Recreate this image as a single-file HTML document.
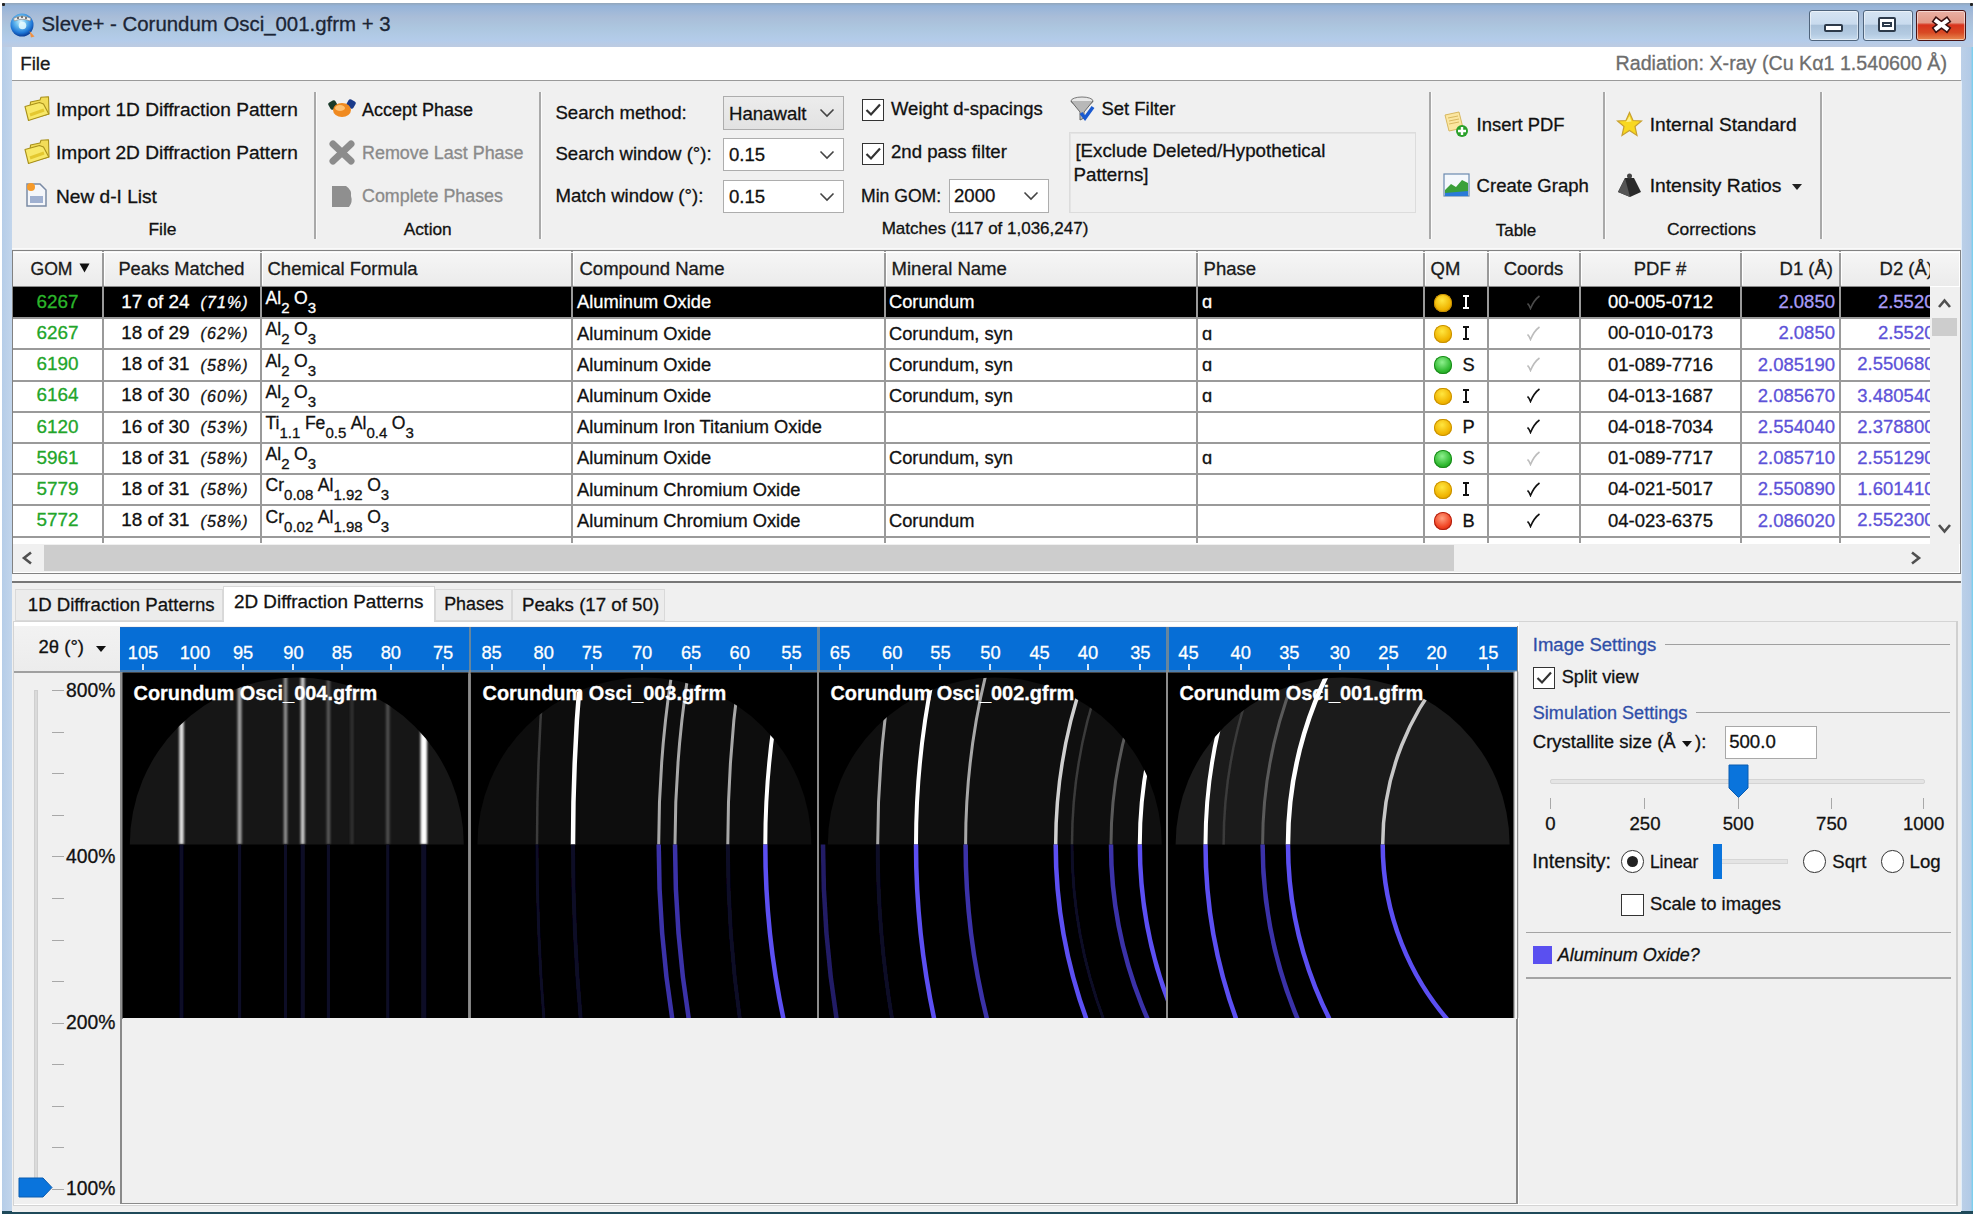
<!DOCTYPE html>
<html><head><meta charset="utf-8"><title>Sleve+</title>
<style>
html,body{margin:0;padding:0;}
body{width:1975px;height:1216px;position:relative;overflow:hidden;background:#fff;font-family:"Liberation Sans",sans-serif;}
.t{position:absolute;white-space:pre;-webkit-text-stroke:0.3px currentColor;}
.r{position:absolute;box-sizing:border-box;}
svg{position:absolute;}
</style></head><body>

<div class="r" style="left:2px;top:3px;width:1971px;height:1210px;background:#bdd2ea;"></div>
<div class="r" style="left:2px;top:3px;width:1971px;height:44px;background:linear-gradient(#92a6ba 0px,#96b4d9 3px,#a9bdd8 14px,#adc7e0 26px,#b4ccea 38px,#bccbe2 43px);"></div>
<div class="r" style="left:2px;top:47px;width:11px;height:1164px;background:linear-gradient(90deg,#b6cde8,#c3d6ec);"></div>
<div class="r" style="left:1961px;top:47px;width:12px;height:1164px;background:linear-gradient(90deg,#bcd0e8,#b2cae6 80%,#6fd0f0);"></div>
<div class="r" style="left:2px;top:1211px;width:1971px;height:3px;background:#1f4a5a;"></div>
<div class="r" style="left:11.5px;top:81px;width:2.5px;height:1130px;background:#e2eef9;"></div>
<div class="r" style="left:1959.5px;top:81px;width:2px;height:1130px;background:#e2eef9;"></div>
<div class="r" style="left:2px;top:3px;width:3px;height:3px;background:#222;border-radius:1px;"></div>
<div class="r" style="left:1970px;top:3px;width:3px;height:3px;background:#222;border-radius:1px;"></div>
<svg style="left:8px;top:10px" width="30" height="30" viewBox="0 0 30 30">
<defs><radialGradient id="gl" cx="45%" cy="35%" r="65%"><stop offset="0" stop-color="#d8f4ff"/><stop offset="0.35" stop-color="#6cc0f0"/><stop offset="0.75" stop-color="#1f78d8"/><stop offset="1" stop-color="#0a3c96"/></radialGradient></defs>
<circle cx="14" cy="15" r="11.5" fill="url(#gl)"/>
<path d="M5.5 8.5 Q14 3.5 23 8.5 L22 11 Q14 7.5 6.5 11 Z" fill="#f0f0f0" stroke="#8c8c8c" stroke-width="0.7"/>
<rect x="9" y="7" width="2" height="2" fill="#777"/><rect x="13" y="6" width="2" height="2" fill="#777"/><rect x="17" y="7" width="2" height="2" fill="#777"/>
<circle cx="14.5" cy="15.5" r="3.8" fill="#e8fbff" opacity="0.85"/>
<path d="M21.5 21 L26.5 26.5 L23 27.5 Z" fill="#f09040"/>
</svg>
<div class="t" style="left:41.5px;top:14.1px;font-size:20.4px;line-height:20.4px;color:#1b2535;font-weight:normal;font-style:normal;">Sleve+ - Corundum Osci_001.gfrm + 3</div>
<div class="r" style="left:1809px;top:10px;width:50px;height:31px;background:linear-gradient(#d6e4f2 0%,#c9dbee 45%,#a9c1d9 50%,#b4cbe2 80%,#c8dcef 100%);border:1.5px solid #4f647c;border-radius:3px;box-shadow:inset 0 0 0 1px rgba(255,255,255,0.5);"></div>
<div class="r" style="left:1863px;top:10px;width:50px;height:31px;background:linear-gradient(#d6e4f2 0%,#c9dbee 45%,#a9c1d9 50%,#b4cbe2 80%,#c8dcef 100%);border:1.5px solid #4f647c;border-radius:3px;box-shadow:inset 0 0 0 1px rgba(255,255,255,0.5);"></div>
<div class="r" style="left:1916px;top:10px;width:50px;height:31px;background:linear-gradient(#eab0a4 0%,#e39a88 40%,#d8321c 48%,#d84a24 75%,#e88a50 100%);border:1.5px solid #4a1212;border-radius:3px;box-shadow:inset 0 0 0 1px rgba(255,255,255,0.5);"></div>
<div class="r" style="left:1824px;top:24px;width:19px;height:8px;background:#fff;border:2px solid #2d3a4a;border-radius:2px;"></div>
<div class="r" style="left:1878px;top:17px;width:18px;height:15px;background:#fff;border:2px solid #2d3a4a;border-radius:2px;"></div>
<div class="r" style="left:1882px;top:22px;width:10px;height:5px;background:#fff;border:2px solid #2d3a4a;"></div>
<svg style="left:1931px;top:16px" width="21" height="18" viewBox="0 0 21 18">
<path d="M5.5 5 L15.5 12.5 M15.5 5 L5.5 12.5" stroke="#3a1010" stroke-width="7" stroke-linecap="square"/>
<path d="M5.5 5 L15.5 12.5 M15.5 5 L5.5 12.5" stroke="#fff" stroke-width="4" stroke-linecap="square"/>
</svg>
<div class="r" style="left:12px;top:47px;width:1949px;height:33px;background:#fff;"></div>
<div class="r" style="left:12px;top:80px;width:1949px;height:1px;background:#9a9a9a;"></div>
<div class="t" style="left:20.2px;top:55.1px;font-size:18.8px;line-height:18.8px;color:#1a1a1a;font-weight:normal;font-style:normal;">File</div>
<div class="t" style="left:1447.0px;width:500px;text-align:right;top:54.3px;font-size:19.66px;line-height:19.66px;color:#6d6d6d;font-weight:normal;font-style:normal;">Radiation: X-ray (Cu Kα1 1.540600 Å)</div>
<div class="r" style="left:12px;top:81px;width:1949px;height:169px;background:#f0f0f0;"></div>
<div class="r" style="left:12px;top:248px;width:1949px;height:1.2px;background:#fafafa;"></div>
<div class="r" style="left:313.5px;top:92px;width:2px;height:147px;background:#a9a9a9;"></div>
<div class="r" style="left:315.5px;top:92px;width:1px;height:147px;background:#fbfbfb;"></div>
<div class="r" style="left:539px;top:92px;width:2px;height:147px;background:#a9a9a9;"></div>
<div class="r" style="left:541px;top:92px;width:1px;height:147px;background:#fbfbfb;"></div>
<div class="r" style="left:1428.5px;top:92px;width:2px;height:147px;background:#a9a9a9;"></div>
<div class="r" style="left:1430.5px;top:92px;width:1px;height:147px;background:#fbfbfb;"></div>
<div class="r" style="left:1602.5px;top:92px;width:2px;height:147px;background:#a9a9a9;"></div>
<div class="r" style="left:1604.5px;top:92px;width:1px;height:147px;background:#fbfbfb;"></div>
<div class="r" style="left:1820px;top:92px;width:2px;height:147px;background:#a9a9a9;"></div>
<div class="r" style="left:1822px;top:92px;width:1px;height:147px;background:#fbfbfb;"></div>
<svg style="left:24px;top:96px" width="27" height="26" viewBox="0 0 27 26">
<path d="M6.5 6 L16 4 L17 1.2 L24.5 0.8 L25 18 L5 23.5 Z" fill="#f2dc58" stroke="#a8901a" stroke-width="1.1" stroke-linejoin="round"/>
<path d="M1 10.5 L15.5 6.5 L19.5 8 L24.8 18 L4.5 24.5 Z" fill="#f8e868" stroke="#a8901a" stroke-width="1.1" stroke-linejoin="round"/>
<path d="M6 19 L20 14" stroke="#e4c830" stroke-width="3"/>
</svg>
<svg style="left:24px;top:139px" width="27" height="26" viewBox="0 0 27 26">
<path d="M6.5 6 L16 4 L17 1.2 L24.5 0.8 L25 18 L5 23.5 Z" fill="#f2dc58" stroke="#a8901a" stroke-width="1.1" stroke-linejoin="round"/>
<path d="M1 10.5 L15.5 6.5 L19.5 8 L24.8 18 L4.5 24.5 Z" fill="#f8e868" stroke="#a8901a" stroke-width="1.1" stroke-linejoin="round"/>
<path d="M6 19 L20 14" stroke="#e4c830" stroke-width="3"/>
</svg>
<svg style="left:25px;top:182px" width="24" height="26" viewBox="0 0 24 26">
<path d="M2 2 L15 2 L21 8 L21 24 L2 24 Z" fill="#f4f6fa" stroke="#7a8aa4" stroke-width="1.5"/>
<rect x="5" y="14" width="13" height="7" fill="#9fb0d0"/>
<circle cx="6" cy="5" r="4" fill="#f59a2a"/>
</svg>
<div class="t" style="left:56.0px;top:99.8px;font-size:19.13px;line-height:19.13px;color:#111;font-weight:normal;font-style:normal;">Import 1D Diffraction Pattern</div>
<div class="t" style="left:56.0px;top:143.0px;font-size:19.13px;line-height:19.13px;color:#111;font-weight:normal;font-style:normal;">Import 2D Diffraction Pattern</div>
<div class="t" style="left:56.0px;top:186.8px;font-size:19.13px;line-height:19.13px;color:#111;font-weight:normal;font-style:normal;">New d-I List</div>
<div class="t" style="left:112.5px;width:100px;text-align:center;top:221.3px;font-size:17.4px;line-height:17.4px;color:#111;font-weight:normal;font-style:normal;">File</div>
<svg style="left:328px;top:98px" width="28" height="22" viewBox="0 0 28 22">
<rect x="1" y="3" width="8" height="8" rx="2" transform="rotate(-30 5 7)" fill="#1a3a2a"/>
<rect x="19" y="2" width="8" height="8" rx="2" transform="rotate(30 23 6)" fill="#1a3a8a"/>
<ellipse cx="14" cy="12" rx="9" ry="7" fill="#f08a20"/>
<ellipse cx="12" cy="10" rx="5" ry="3" fill="#ffc070"/>
</svg>
<svg style="left:329px;top:140px" width="26" height="25" viewBox="0 0 26 25">
<path d="M4 4 L22 21 M22 4 L4 21" stroke="#8c8c8c" stroke-width="7" stroke-linecap="round"/>
</svg>
<svg style="left:330px;top:184px" width="24" height="25" viewBox="0 0 24 25">
<path d="M2 2 L16 2 Q22 6 21 12 Q23 18 19 23 L2 23 Z" fill="#8f8f8f"/>
</svg>
<div class="t" style="left:362.0px;top:100.8px;font-size:18.0px;line-height:18.0px;color:#111;font-weight:normal;font-style:normal;">Accept Phase</div>
<div class="t" style="left:362.0px;top:144.5px;font-size:17.95px;line-height:17.95px;color:#8a8a8a;font-weight:normal;font-style:normal;">Remove Last Phase</div>
<div class="t" style="left:362.0px;top:187.9px;font-size:17.86px;line-height:17.86px;color:#8a8a8a;font-weight:normal;font-style:normal;">Complete Phases</div>
<div class="t" style="left:377.7px;width:100px;text-align:center;top:220.6px;font-size:17.3px;line-height:17.3px;color:#111;font-weight:normal;font-style:normal;">Action</div>
<div class="t" style="left:555.4px;top:104.1px;font-size:18.6px;line-height:18.6px;color:#111;font-weight:normal;font-style:normal;">Search method:</div>
<div class="t" style="left:555.4px;top:145.3px;font-size:18.6px;line-height:18.6px;color:#111;font-weight:normal;font-style:normal;">Search window (°):</div>
<div class="t" style="left:555.4px;top:187.3px;font-size:18.6px;line-height:18.6px;color:#111;font-weight:normal;font-style:normal;">Match window (°):</div>
<div class="r" style="left:723px;top:96px;width:121px;height:34px;background:linear-gradient(#ececec,#e2e2e2);border:1px solid #adadad;"></div>
<div class="t" style="left:729.0px;top:104.5px;font-size:18.6px;line-height:18.6px;color:#111;font-weight:normal;font-style:normal;">Hanawalt</div>
<svg style="left:819px;top:108.0px" width="16" height="10" viewBox="0 0 16 10"><path d="M1.5 1.5 L8 8 L14.5 1.5" fill="none" stroke="#444" stroke-width="1.6"/></svg>
<div class="r" style="left:723px;top:138px;width:121px;height:33px;background:#fff;border:1px solid #adadad;"></div>
<div class="t" style="left:729.0px;top:146.0px;font-size:18.6px;line-height:18.6px;color:#111;font-weight:normal;font-style:normal;">0.15</div>
<svg style="left:819px;top:149.5px" width="16" height="10" viewBox="0 0 16 10"><path d="M1.5 1.5 L8 8 L14.5 1.5" fill="none" stroke="#444" stroke-width="1.6"/></svg>
<div class="r" style="left:723px;top:180px;width:121px;height:33px;background:#fff;border:1px solid #adadad;"></div>
<div class="t" style="left:729.0px;top:188.0px;font-size:18.6px;line-height:18.6px;color:#111;font-weight:normal;font-style:normal;">0.15</div>
<svg style="left:819px;top:191.5px" width="16" height="10" viewBox="0 0 16 10"><path d="M1.5 1.5 L8 8 L14.5 1.5" fill="none" stroke="#444" stroke-width="1.6"/></svg>
<div class="r" style="left:861.5px;top:98.5px;width:22px;height:22px;background:#fff;border:1.6px solid #333;"></div>
<svg style="left:861.5px;top:98.5px" width="22" height="22" viewBox="0 0 22 22"><path d="M4.5 11 L9 15.5 L18 5.5" fill="none" stroke="#333" stroke-width="2.2"/></svg>
<div class="r" style="left:861.5px;top:142.5px;width:22px;height:22px;background:#fff;border:1.6px solid #333;"></div>
<svg style="left:861.5px;top:142.5px" width="22" height="22" viewBox="0 0 22 22"><path d="M4.5 11 L9 15.5 L18 5.5" fill="none" stroke="#333" stroke-width="2.2"/></svg>
<div class="t" style="left:891.0px;top:99.8px;font-size:18.49px;line-height:18.49px;color:#111;font-weight:normal;font-style:normal;">Weight d-spacings</div>
<div class="t" style="left:891.0px;top:143.2px;font-size:18.63px;line-height:18.63px;color:#111;font-weight:normal;font-style:normal;">2nd pass filter</div>
<div class="t" style="left:861.0px;top:187.8px;font-size:17.6px;line-height:17.6px;color:#111;font-weight:normal;font-style:normal;">Min GOM:</div>
<div class="r" style="left:949px;top:179px;width:100px;height:34px;background:#fff;border:1px solid #adadad;"></div>
<div class="t" style="left:954.0px;top:187.3px;font-size:18.6px;line-height:18.6px;color:#111;font-weight:normal;font-style:normal;">2000</div>
<svg style="left:1023px;top:191px" width="16" height="10" viewBox="0 0 16 10"><path d="M1.5 1.5 L8 8 L14.5 1.5" fill="none" stroke="#444" stroke-width="1.6"/></svg>
<div class="t" style="left:835.0px;width:300px;text-align:center;top:220.2px;font-size:17.0px;line-height:17.0px;color:#111;font-weight:normal;font-style:normal;">Matches (117 of 1,036,247)</div>
<svg style="left:1069px;top:96px" width="27" height="27" viewBox="0 0 27 27">
<ellipse cx="13" cy="5" rx="11" ry="4" fill="#e8e8e8" stroke="#777" stroke-width="1"/>
<path d="M2 5 L11 16 L11 24 L15 22 L15 16 L24 5" fill="#b8b8b8" stroke="#666" stroke-width="1"/>
<path d="M12 17 L16 22 L24 11" fill="none" stroke="#1a5ad0" stroke-width="3.5"/>
</svg>
<div class="t" style="left:1101.4px;top:100.1px;font-size:18.49px;line-height:18.49px;color:#111;font-weight:normal;font-style:normal;">Set Filter</div>
<div class="r" style="left:1068.5px;top:132px;width:347px;height:81px;background:#f0f0f0;border:1px solid #dcdcdc;box-shadow:inset 1px 1px 0 #e4e4e4;"></div>
<div class="t" style="left:1075.4px;top:142.1px;font-size:18.74px;line-height:18.74px;color:#111;font-weight:normal;font-style:normal;">[Exclude Deleted/Hypothetical</div>
<div class="t" style="left:1073.5px;top:166.1px;font-size:18.74px;line-height:18.74px;color:#111;font-weight:normal;font-style:normal;">Patterns]</div>
<svg style="left:1442px;top:110px" width="29" height="29" viewBox="0 0 29 29">
<path d="M3 5 L17 2 L21 18 L7 21 Z" fill="#fbe6a0" stroke="#d8b860" stroke-width="1"/>
<path d="M6 8 L16 6 M7 11 L17 9 M7 14 L17 12" stroke="#d8b860" stroke-width="1"/>
<circle cx="20" cy="21" r="6" fill="#2aa02a"/>
<path d="M20 17 L20 25 M16 21 L24 21" stroke="#fff" stroke-width="2.4"/>
</svg>
<svg style="left:1443px;top:172px" width="27" height="27" viewBox="0 0 27 27">
<rect x="1" y="2" width="25" height="22" fill="#f4f8fc" stroke="#6a8ab0" stroke-width="1.2"/>
<path d="M2 18 L8 12 L13 15 L19 8 L25 11 L25 24 L2 24 Z" fill="#3aa03a"/>
<path d="M2 21 L25 19 L25 24 L2 24 Z" fill="#2a7ad8"/>
</svg>
<div class="t" style="left:1476.6px;top:116.0px;font-size:18.41px;line-height:18.41px;color:#111;font-weight:normal;font-style:normal;">Insert PDF</div>
<div class="t" style="left:1476.6px;top:176.6px;font-size:18.55px;line-height:18.55px;color:#111;font-weight:normal;font-style:normal;">Create Graph</div>
<div class="t" style="left:1466.0px;width:100px;text-align:center;top:221.5px;font-size:17.0px;line-height:17.0px;color:#111;font-weight:normal;font-style:normal;">Table</div>
<svg style="left:1616px;top:111px" width="27" height="27" viewBox="0 0 27 27">
<path d="M13.5 1.5 L17 9.5 L25.5 10 L19 15.5 L21 24.5 L13.5 19.5 L6 24.5 L8 15.5 L1.5 10 L10 9.5 Z" fill="#f8d820" stroke="#c8a030" stroke-width="1.2"/>
<path d="M13.5 5 L15.5 10.5 L10 11 Z" fill="#fff6a0" opacity="0.8"/>
</svg>
<svg style="left:1616px;top:172px" width="27" height="27" viewBox="0 0 27 27">
<path d="M9 6 L18 6 L25 20 L14 25 L2 20 Z" fill="#2a2a2a"/>
<path d="M9 6 L14 25 L2 20 Z" fill="#555"/>
<circle cx="13.5" cy="4" r="2.5" fill="#444"/>
</svg>
<div class="t" style="left:1649.7px;top:115.4px;font-size:19.16px;line-height:19.16px;color:#111;font-weight:normal;font-style:normal;">Internal Standard</div>
<div class="t" style="left:1649.7px;top:176.0px;font-size:19.26px;line-height:19.26px;color:#111;font-weight:normal;font-style:normal;">Intensity Ratios</div>
<svg style="left:1791px;top:183px" width="12" height="8" viewBox="0 0 12 8"><path d="M1 1 L11 1 L6 7 Z" fill="#222"/></svg>
<div class="t" style="left:1611.5px;width:200px;text-align:center;top:221.2px;font-size:17.41px;line-height:17.41px;color:#111;font-weight:normal;font-style:normal;">Corrections</div>
<div class="r" style="left:12px;top:249.5px;width:1949px;height:324px;background:#fff;border:1.5px solid #828282;"></div>
<div class="r" style="left:13px;top:251px;width:1946px;height:35px;background:linear-gradient(#f6f6f6,#ebebeb);"></div>
<div class="r" style="left:13px;top:285.5px;width:1917px;height:1.5px;background:#8a8a8a;"></div>
<div class="r" style="left:101.7px;top:251px;width:2px;height:35px;background:#9a9a9a;"></div>
<div class="r" style="left:103.7px;top:252px;width:1px;height:33px;background:#fff;"></div>
<div class="r" style="left:259.8px;top:251px;width:2px;height:35px;background:#9a9a9a;"></div>
<div class="r" style="left:261.8px;top:252px;width:1px;height:33px;background:#fff;"></div>
<div class="r" style="left:571.4px;top:251px;width:2px;height:35px;background:#9a9a9a;"></div>
<div class="r" style="left:573.4px;top:252px;width:1px;height:33px;background:#fff;"></div>
<div class="r" style="left:883.5px;top:251px;width:2px;height:35px;background:#9a9a9a;"></div>
<div class="r" style="left:885.5px;top:252px;width:1px;height:33px;background:#fff;"></div>
<div class="r" style="left:1195.5px;top:251px;width:2px;height:35px;background:#9a9a9a;"></div>
<div class="r" style="left:1197.5px;top:252px;width:1px;height:33px;background:#fff;"></div>
<div class="r" style="left:1423.3px;top:251px;width:2px;height:35px;background:#9a9a9a;"></div>
<div class="r" style="left:1425.3px;top:252px;width:1px;height:33px;background:#fff;"></div>
<div class="r" style="left:1487.4px;top:251px;width:2px;height:35px;background:#9a9a9a;"></div>
<div class="r" style="left:1489.4px;top:252px;width:1px;height:33px;background:#fff;"></div>
<div class="r" style="left:1579.3px;top:251px;width:2px;height:35px;background:#9a9a9a;"></div>
<div class="r" style="left:1581.3px;top:252px;width:1px;height:33px;background:#fff;"></div>
<div class="r" style="left:1740.2px;top:251px;width:2px;height:35px;background:#9a9a9a;"></div>
<div class="r" style="left:1742.2px;top:252px;width:1px;height:33px;background:#fff;"></div>
<div class="r" style="left:1839.4px;top:251px;width:2px;height:35px;background:#9a9a9a;"></div>
<div class="r" style="left:1841.4px;top:252px;width:1px;height:33px;background:#fff;"></div>
<div class="r" style="left:13px;top:252px;width:1946px;height:1px;background:#fff;"></div>
<div class="t" style="left:30.5px;top:260.6px;font-size:17.6px;line-height:17.6px;color:#1a1a1a;font-weight:normal;font-style:normal;">GOM</div>
<svg style="left:79px;top:263px" width="11" height="10" viewBox="0 0 11 10"><path d="M0.5 0.5 L10.5 0.5 L5.5 9.5 Z" fill="#111"/></svg>
<div class="t" style="left:118.4px;top:260.0px;font-size:18.3px;line-height:18.3px;color:#1a1a1a;font-weight:normal;font-style:normal;">Peaks Matched</div>
<div class="t" style="left:267.5px;top:259.8px;font-size:18.5px;line-height:18.5px;color:#1a1a1a;font-weight:normal;font-style:normal;">Chemical Formula</div>
<div class="t" style="left:579.5px;top:259.8px;font-size:18.5px;line-height:18.5px;color:#1a1a1a;font-weight:normal;font-style:normal;">Compound Name</div>
<div class="t" style="left:891.6px;top:259.8px;font-size:18.5px;line-height:18.5px;color:#1a1a1a;font-weight:normal;font-style:normal;">Mineral Name</div>
<div class="t" style="left:1203.6px;top:259.8px;font-size:18.5px;line-height:18.5px;color:#1a1a1a;font-weight:normal;font-style:normal;">Phase</div>
<div class="t" style="left:1430.5px;top:259.8px;font-size:18.5px;line-height:18.5px;color:#1a1a1a;font-weight:normal;font-style:normal;">QM</div>
<div class="t" style="left:1488.5px;width:90px;text-align:center;top:259.8px;font-size:18.5px;line-height:18.5px;color:#1a1a1a;font-weight:normal;font-style:normal;">Coords</div>
<div class="t" style="left:1585.0px;width:150px;text-align:center;top:259.8px;font-size:18.5px;line-height:18.5px;color:#1a1a1a;font-weight:normal;font-style:normal;">PDF #</div>
<div class="t" style="left:1743.0px;width:90px;text-align:right;top:259.8px;font-size:18.5px;line-height:18.5px;color:#1a1a1a;font-weight:normal;font-style:normal;">D1 (Å)</div>
<div style="position:absolute;left:1841px;top:251px;width:89px;height:35px;overflow:hidden">
<div class="t" style="left:2.0px;width:90px;text-align:right;top:8.8px;font-size:18.5px;line-height:18.5px;color:#1a1a1a;font-weight:normal;font-style:normal;">D2 (Å)</div>
</div>
<div class="r" style="left:13px;top:287px;width:1917px;height:30.5px;background:#000;"></div>
<div class="r" style="left:13px;top:317px;width:1917px;height:1.5px;background:#9a9a9a;"></div>
<div class="r" style="left:13px;top:348px;width:1917px;height:1.5px;background:#9a9a9a;"></div>
<div class="r" style="left:13px;top:380px;width:1917px;height:1.5px;background:#9a9a9a;"></div>
<div class="r" style="left:13px;top:411px;width:1917px;height:1.5px;background:#9a9a9a;"></div>
<div class="r" style="left:13px;top:442px;width:1917px;height:1.5px;background:#9a9a9a;"></div>
<div class="r" style="left:13px;top:473px;width:1917px;height:1.5px;background:#9a9a9a;"></div>
<div class="r" style="left:13px;top:504px;width:1917px;height:1.5px;background:#9a9a9a;"></div>
<div class="r" style="left:13px;top:536px;width:1917px;height:1.5px;background:#9a9a9a;"></div>
<div class="r" style="left:101.7px;top:287px;width:2px;height:256px;background:#9a9a9a;"></div>
<div class="r" style="left:259.8px;top:287px;width:2px;height:256px;background:#9a9a9a;"></div>
<div class="r" style="left:571.4px;top:287px;width:2px;height:256px;background:#9a9a9a;"></div>
<div class="r" style="left:883.5px;top:287px;width:2px;height:256px;background:#9a9a9a;"></div>
<div class="r" style="left:1195.5px;top:287px;width:2px;height:256px;background:#9a9a9a;"></div>
<div class="r" style="left:1423.3px;top:287px;width:2px;height:256px;background:#9a9a9a;"></div>
<div class="r" style="left:1487.4px;top:287px;width:2px;height:256px;background:#9a9a9a;"></div>
<div class="r" style="left:1579.3px;top:287px;width:2px;height:256px;background:#9a9a9a;"></div>
<div class="r" style="left:1740.2px;top:287px;width:2px;height:256px;background:#9a9a9a;"></div>
<div class="r" style="left:1839.4px;top:287px;width:2px;height:256px;background:#9a9a9a;"></div>
<div class="t" style="left:17.5px;width:80px;text-align:center;top:292.8px;font-size:18.9px;line-height:18.9px;color:#2bb52b;font-weight:normal;font-style:normal;">6267</div>
<div class="t" style="left:121.2px;top:292.8px;font-size:18.9px;line-height:18.9px;color:#fff;font-weight:normal;font-style:normal;">17 of 24</div>
<div class="t" style="left:200.6px;top:295.1px;font-size:16px;line-height:16px;color:#fff;font-weight:normal;font-style:italic;letter-spacing:1.1px;">(71%)</div>
<div class="t" style="left:265.5px;top:290.1px;font-size:17.6px;line-height:17.6px;color:#fff;font-weight:normal;font-style:normal;"><span>Al</span><span style="font-size:15px;position:relative;top:9px;margin-left:0px;margin-right:4.5px">2</span><span>O</span><span style="font-size:15px;position:relative;top:9px;margin-left:0px;margin-right:4.5px">3</span></div>
<div class="t" style="left:577.0px;top:293.3px;font-size:18.3px;line-height:18.3px;color:#fff;font-weight:normal;font-style:normal;">Aluminum Oxide</div>
<div class="t" style="left:889.0px;top:293.3px;font-size:18.3px;line-height:18.3px;color:#fff;font-weight:normal;font-style:normal;">Corundum</div>
<div class="t" style="left:1202.0px;top:293.3px;font-size:18.3px;line-height:18.3px;color:#fff;font-weight:normal;font-style:normal;">ɑ</div>
<div class="r" style="left:1434px;top:294.0px;width:17.5px;height:17.5px;border-radius:50%;background:radial-gradient(circle at 45% 35%,#ffe640,#f0b400 60%,#c89000);box-shadow:inset 0 0 0 1px #c89000;"></div>
<svg style="left:1462px;top:295.0px" width="8" height="14" viewBox="0 0 8 14"><path d="M1 1 L7 1 M4 1 L4 13 M1 13 L7 13" fill="none" stroke="#fff" stroke-width="2"/></svg>
<svg style="left:1526px;top:294.5px" width="15" height="15" viewBox="0 0 15 15"><path d="M1.5 8.5 Q3 9.5 4.5 13.5 Q8 5 13.5 1" fill="none" stroke="#4a4a4a" stroke-width="1.6"/></svg>
<div class="t" style="left:1580.5px;width:160px;text-align:center;top:293.1px;font-size:18.5px;line-height:18.5px;color:#fff;font-weight:normal;font-style:normal;">00-005-0712</div>
<div class="t" style="left:1737.0px;width:98px;text-align:right;top:293.1px;font-size:18.5px;line-height:18.5px;color:#a89cf8;font-weight:normal;font-style:normal;">2.0850</div>
<div style="position:absolute;left:1841px;top:286.5px;width:89px;height:31px;overflow:hidden">
<div class="t" style="left:-4.5px;width:98px;text-align:right;top:6.6px;font-size:18.5px;line-height:18.5px;color:#a89cf8;font-weight:normal;font-style:normal;">2.5520</div>
</div>
<div class="t" style="left:17.5px;width:80px;text-align:center;top:324.0px;font-size:18.9px;line-height:18.9px;color:#22a52a;font-weight:normal;font-style:normal;">6267</div>
<div class="t" style="left:121.2px;top:324.0px;font-size:18.9px;line-height:18.9px;color:#111;font-weight:normal;font-style:normal;">18 of 29</div>
<div class="t" style="left:200.6px;top:326.3px;font-size:16px;line-height:16px;color:#111;font-weight:normal;font-style:italic;letter-spacing:1.1px;">(62%)</div>
<div class="t" style="left:265.5px;top:321.3px;font-size:17.6px;line-height:17.6px;color:#111;font-weight:normal;font-style:normal;"><span>Al</span><span style="font-size:15px;position:relative;top:9px;margin-left:0px;margin-right:4.5px">2</span><span>O</span><span style="font-size:15px;position:relative;top:9px;margin-left:0px;margin-right:4.5px">3</span></div>
<div class="t" style="left:577.0px;top:324.5px;font-size:18.3px;line-height:18.3px;color:#111;font-weight:normal;font-style:normal;">Aluminum Oxide</div>
<div class="t" style="left:889.0px;top:324.5px;font-size:18.3px;line-height:18.3px;color:#111;font-weight:normal;font-style:normal;">Corundum, syn</div>
<div class="t" style="left:1202.0px;top:324.5px;font-size:18.3px;line-height:18.3px;color:#111;font-weight:normal;font-style:normal;">ɑ</div>
<div class="r" style="left:1434px;top:325.2px;width:17.5px;height:17.5px;border-radius:50%;background:radial-gradient(circle at 45% 35%,#ffe640,#f0b400 60%,#c89000);box-shadow:inset 0 0 0 1px #c89000;"></div>
<svg style="left:1462px;top:326.2px" width="8" height="14" viewBox="0 0 8 14"><path d="M1 1 L7 1 M4 1 L4 13 M1 13 L7 13" fill="none" stroke="#111" stroke-width="2"/></svg>
<svg style="left:1526px;top:325.7px" width="15" height="15" viewBox="0 0 15 15"><path d="M1.5 8.5 Q3 9.5 4.5 13.5 Q8 5 13.5 1" fill="none" stroke="#bdbdbd" stroke-width="1.6"/></svg>
<div class="t" style="left:1580.5px;width:160px;text-align:center;top:324.3px;font-size:18.5px;line-height:18.5px;color:#111;font-weight:normal;font-style:normal;">00-010-0173</div>
<div class="t" style="left:1737.0px;width:98px;text-align:right;top:324.3px;font-size:18.5px;line-height:18.5px;color:#5d52d8;font-weight:normal;font-style:normal;">2.0850</div>
<div style="position:absolute;left:1841px;top:317.7px;width:89px;height:31px;overflow:hidden">
<div class="t" style="left:-4.5px;width:98px;text-align:right;top:6.6px;font-size:18.5px;line-height:18.5px;color:#5d52d8;font-weight:normal;font-style:normal;">2.5520</div>
</div>
<div class="t" style="left:17.5px;width:80px;text-align:center;top:355.2px;font-size:18.9px;line-height:18.9px;color:#22a52a;font-weight:normal;font-style:normal;">6190</div>
<div class="t" style="left:121.2px;top:355.2px;font-size:18.9px;line-height:18.9px;color:#111;font-weight:normal;font-style:normal;">18 of 31</div>
<div class="t" style="left:200.6px;top:357.5px;font-size:16px;line-height:16px;color:#111;font-weight:normal;font-style:italic;letter-spacing:1.1px;">(58%)</div>
<div class="t" style="left:265.5px;top:352.5px;font-size:17.6px;line-height:17.6px;color:#111;font-weight:normal;font-style:normal;"><span>Al</span><span style="font-size:15px;position:relative;top:9px;margin-left:0px;margin-right:4.5px">2</span><span>O</span><span style="font-size:15px;position:relative;top:9px;margin-left:0px;margin-right:4.5px">3</span></div>
<div class="t" style="left:577.0px;top:355.7px;font-size:18.3px;line-height:18.3px;color:#111;font-weight:normal;font-style:normal;">Aluminum Oxide</div>
<div class="t" style="left:889.0px;top:355.7px;font-size:18.3px;line-height:18.3px;color:#111;font-weight:normal;font-style:normal;">Corundum, syn</div>
<div class="t" style="left:1202.0px;top:355.7px;font-size:18.3px;line-height:18.3px;color:#111;font-weight:normal;font-style:normal;">ɑ</div>
<div class="r" style="left:1434px;top:356.4px;width:17.5px;height:17.5px;border-radius:50%;background:radial-gradient(circle at 45% 35%,#8ef08e,#2eb82e 60%,#1a8a1a);box-shadow:inset 0 0 0 1px #1a8a1a;"></div>
<div class="t" style="left:1462.5px;top:355.7px;font-size:18.3px;line-height:18.3px;color:#111;font-weight:normal;font-style:normal;">S</div>
<svg style="left:1526px;top:356.9px" width="15" height="15" viewBox="0 0 15 15"><path d="M1.5 8.5 Q3 9.5 4.5 13.5 Q8 5 13.5 1" fill="none" stroke="#bdbdbd" stroke-width="1.6"/></svg>
<div class="t" style="left:1580.5px;width:160px;text-align:center;top:355.5px;font-size:18.5px;line-height:18.5px;color:#111;font-weight:normal;font-style:normal;">01-089-7716</div>
<div class="t" style="left:1737.0px;width:98px;text-align:right;top:355.5px;font-size:18.5px;line-height:18.5px;color:#5d52d8;font-weight:normal;font-style:normal;">2.085190</div>
<div style="position:absolute;left:1841px;top:348.9px;width:89px;height:31px;overflow:hidden">
<div class="t" style="left:-4.5px;width:98px;text-align:right;top:6.6px;font-size:18.5px;line-height:18.5px;color:#5d52d8;font-weight:normal;font-style:normal;">2.550680</div>
</div>
<div class="t" style="left:17.5px;width:80px;text-align:center;top:386.4px;font-size:18.9px;line-height:18.9px;color:#22a52a;font-weight:normal;font-style:normal;">6164</div>
<div class="t" style="left:121.2px;top:386.4px;font-size:18.9px;line-height:18.9px;color:#111;font-weight:normal;font-style:normal;">18 of 30</div>
<div class="t" style="left:200.6px;top:388.7px;font-size:16px;line-height:16px;color:#111;font-weight:normal;font-style:italic;letter-spacing:1.1px;">(60%)</div>
<div class="t" style="left:265.5px;top:383.7px;font-size:17.6px;line-height:17.6px;color:#111;font-weight:normal;font-style:normal;"><span>Al</span><span style="font-size:15px;position:relative;top:9px;margin-left:0px;margin-right:4.5px">2</span><span>O</span><span style="font-size:15px;position:relative;top:9px;margin-left:0px;margin-right:4.5px">3</span></div>
<div class="t" style="left:577.0px;top:386.9px;font-size:18.3px;line-height:18.3px;color:#111;font-weight:normal;font-style:normal;">Aluminum Oxide</div>
<div class="t" style="left:889.0px;top:386.9px;font-size:18.3px;line-height:18.3px;color:#111;font-weight:normal;font-style:normal;">Corundum, syn</div>
<div class="t" style="left:1202.0px;top:386.9px;font-size:18.3px;line-height:18.3px;color:#111;font-weight:normal;font-style:normal;">ɑ</div>
<div class="r" style="left:1434px;top:387.6px;width:17.5px;height:17.5px;border-radius:50%;background:radial-gradient(circle at 45% 35%,#ffe640,#f0b400 60%,#c89000);box-shadow:inset 0 0 0 1px #c89000;"></div>
<svg style="left:1462px;top:388.6px" width="8" height="14" viewBox="0 0 8 14"><path d="M1 1 L7 1 M4 1 L4 13 M1 13 L7 13" fill="none" stroke="#111" stroke-width="2"/></svg>
<svg style="left:1526px;top:388.1px" width="15" height="15" viewBox="0 0 15 15"><path d="M1.5 8.5 Q3 9.5 4.5 13.5 Q8 5 13.5 1" fill="none" stroke="#111" stroke-width="1.6"/></svg>
<div class="t" style="left:1580.5px;width:160px;text-align:center;top:386.7px;font-size:18.5px;line-height:18.5px;color:#111;font-weight:normal;font-style:normal;">04-013-1687</div>
<div class="t" style="left:1737.0px;width:98px;text-align:right;top:386.7px;font-size:18.5px;line-height:18.5px;color:#5d52d8;font-weight:normal;font-style:normal;">2.085670</div>
<div style="position:absolute;left:1841px;top:380.1px;width:89px;height:31px;overflow:hidden">
<div class="t" style="left:-4.5px;width:98px;text-align:right;top:6.6px;font-size:18.5px;line-height:18.5px;color:#5d52d8;font-weight:normal;font-style:normal;">3.480540</div>
</div>
<div class="t" style="left:17.5px;width:80px;text-align:center;top:417.6px;font-size:18.9px;line-height:18.9px;color:#22a52a;font-weight:normal;font-style:normal;">6120</div>
<div class="t" style="left:121.2px;top:417.6px;font-size:18.9px;line-height:18.9px;color:#111;font-weight:normal;font-style:normal;">16 of 30</div>
<div class="t" style="left:200.6px;top:419.9px;font-size:16px;line-height:16px;color:#111;font-weight:normal;font-style:italic;letter-spacing:1.1px;">(53%)</div>
<div class="t" style="left:265.5px;top:414.9px;font-size:17.6px;line-height:17.6px;color:#111;font-weight:normal;font-style:normal;"><span>Ti</span><span style="font-size:15px;position:relative;top:9px;margin-left:0px;margin-right:4.5px">1.1</span><span>Fe</span><span style="font-size:15px;position:relative;top:9px;margin-left:0px;margin-right:4.5px">0.5</span><span>Al</span><span style="font-size:15px;position:relative;top:9px;margin-left:0px;margin-right:4.5px">0.4</span><span>O</span><span style="font-size:15px;position:relative;top:9px;margin-left:0px;margin-right:4.5px">3</span></div>
<div class="t" style="left:577.0px;top:418.1px;font-size:18.3px;line-height:18.3px;color:#111;font-weight:normal;font-style:normal;">Aluminum Iron Titanium Oxide</div>
<div class="t" style="left:889.0px;top:418.1px;font-size:18.3px;line-height:18.3px;color:#111;font-weight:normal;font-style:normal;"></div>
<div class="t" style="left:1202.0px;top:418.1px;font-size:18.3px;line-height:18.3px;color:#111;font-weight:normal;font-style:normal;"></div>
<div class="r" style="left:1434px;top:418.8px;width:17.5px;height:17.5px;border-radius:50%;background:radial-gradient(circle at 45% 35%,#ffe640,#f0b400 60%,#c89000);box-shadow:inset 0 0 0 1px #c89000;"></div>
<div class="t" style="left:1462.5px;top:418.1px;font-size:18.3px;line-height:18.3px;color:#111;font-weight:normal;font-style:normal;">P</div>
<svg style="left:1526px;top:419.3px" width="15" height="15" viewBox="0 0 15 15"><path d="M1.5 8.5 Q3 9.5 4.5 13.5 Q8 5 13.5 1" fill="none" stroke="#111" stroke-width="1.6"/></svg>
<div class="t" style="left:1580.5px;width:160px;text-align:center;top:417.9px;font-size:18.5px;line-height:18.5px;color:#111;font-weight:normal;font-style:normal;">04-018-7034</div>
<div class="t" style="left:1737.0px;width:98px;text-align:right;top:417.9px;font-size:18.5px;line-height:18.5px;color:#5d52d8;font-weight:normal;font-style:normal;">2.554040</div>
<div style="position:absolute;left:1841px;top:411.3px;width:89px;height:31px;overflow:hidden">
<div class="t" style="left:-4.5px;width:98px;text-align:right;top:6.6px;font-size:18.5px;line-height:18.5px;color:#5d52d8;font-weight:normal;font-style:normal;">2.378800</div>
</div>
<div class="t" style="left:17.5px;width:80px;text-align:center;top:448.8px;font-size:18.9px;line-height:18.9px;color:#22a52a;font-weight:normal;font-style:normal;">5961</div>
<div class="t" style="left:121.2px;top:448.8px;font-size:18.9px;line-height:18.9px;color:#111;font-weight:normal;font-style:normal;">18 of 31</div>
<div class="t" style="left:200.6px;top:451.1px;font-size:16px;line-height:16px;color:#111;font-weight:normal;font-style:italic;letter-spacing:1.1px;">(58%)</div>
<div class="t" style="left:265.5px;top:446.1px;font-size:17.6px;line-height:17.6px;color:#111;font-weight:normal;font-style:normal;"><span>Al</span><span style="font-size:15px;position:relative;top:9px;margin-left:0px;margin-right:4.5px">2</span><span>O</span><span style="font-size:15px;position:relative;top:9px;margin-left:0px;margin-right:4.5px">3</span></div>
<div class="t" style="left:577.0px;top:449.3px;font-size:18.3px;line-height:18.3px;color:#111;font-weight:normal;font-style:normal;">Aluminum Oxide</div>
<div class="t" style="left:889.0px;top:449.3px;font-size:18.3px;line-height:18.3px;color:#111;font-weight:normal;font-style:normal;">Corundum, syn</div>
<div class="t" style="left:1202.0px;top:449.3px;font-size:18.3px;line-height:18.3px;color:#111;font-weight:normal;font-style:normal;">ɑ</div>
<div class="r" style="left:1434px;top:450.0px;width:17.5px;height:17.5px;border-radius:50%;background:radial-gradient(circle at 45% 35%,#8ef08e,#2eb82e 60%,#1a8a1a);box-shadow:inset 0 0 0 1px #1a8a1a;"></div>
<div class="t" style="left:1462.5px;top:449.3px;font-size:18.3px;line-height:18.3px;color:#111;font-weight:normal;font-style:normal;">S</div>
<svg style="left:1526px;top:450.5px" width="15" height="15" viewBox="0 0 15 15"><path d="M1.5 8.5 Q3 9.5 4.5 13.5 Q8 5 13.5 1" fill="none" stroke="#bdbdbd" stroke-width="1.6"/></svg>
<div class="t" style="left:1580.5px;width:160px;text-align:center;top:449.1px;font-size:18.5px;line-height:18.5px;color:#111;font-weight:normal;font-style:normal;">01-089-7717</div>
<div class="t" style="left:1737.0px;width:98px;text-align:right;top:449.1px;font-size:18.5px;line-height:18.5px;color:#5d52d8;font-weight:normal;font-style:normal;">2.085710</div>
<div style="position:absolute;left:1841px;top:442.5px;width:89px;height:31px;overflow:hidden">
<div class="t" style="left:-4.5px;width:98px;text-align:right;top:6.6px;font-size:18.5px;line-height:18.5px;color:#5d52d8;font-weight:normal;font-style:normal;">2.551290</div>
</div>
<div class="t" style="left:17.5px;width:80px;text-align:center;top:480.0px;font-size:18.9px;line-height:18.9px;color:#22a52a;font-weight:normal;font-style:normal;">5779</div>
<div class="t" style="left:121.2px;top:480.0px;font-size:18.9px;line-height:18.9px;color:#111;font-weight:normal;font-style:normal;">18 of 31</div>
<div class="t" style="left:200.6px;top:482.3px;font-size:16px;line-height:16px;color:#111;font-weight:normal;font-style:italic;letter-spacing:1.1px;">(58%)</div>
<div class="t" style="left:265.5px;top:477.3px;font-size:17.6px;line-height:17.6px;color:#111;font-weight:normal;font-style:normal;"><span>Cr</span><span style="font-size:15px;position:relative;top:9px;margin-left:0px;margin-right:4.5px">0.08</span><span>Al</span><span style="font-size:15px;position:relative;top:9px;margin-left:0px;margin-right:4.5px">1.92</span><span>O</span><span style="font-size:15px;position:relative;top:9px;margin-left:0px;margin-right:4.5px">3</span></div>
<div class="t" style="left:577.0px;top:480.5px;font-size:18.3px;line-height:18.3px;color:#111;font-weight:normal;font-style:normal;">Aluminum Chromium Oxide</div>
<div class="t" style="left:889.0px;top:480.5px;font-size:18.3px;line-height:18.3px;color:#111;font-weight:normal;font-style:normal;"></div>
<div class="t" style="left:1202.0px;top:480.5px;font-size:18.3px;line-height:18.3px;color:#111;font-weight:normal;font-style:normal;"></div>
<div class="r" style="left:1434px;top:481.2px;width:17.5px;height:17.5px;border-radius:50%;background:radial-gradient(circle at 45% 35%,#ffe640,#f0b400 60%,#c89000);box-shadow:inset 0 0 0 1px #c89000;"></div>
<svg style="left:1462px;top:482.2px" width="8" height="14" viewBox="0 0 8 14"><path d="M1 1 L7 1 M4 1 L4 13 M1 13 L7 13" fill="none" stroke="#111" stroke-width="2"/></svg>
<svg style="left:1526px;top:481.7px" width="15" height="15" viewBox="0 0 15 15"><path d="M1.5 8.5 Q3 9.5 4.5 13.5 Q8 5 13.5 1" fill="none" stroke="#111" stroke-width="1.6"/></svg>
<div class="t" style="left:1580.5px;width:160px;text-align:center;top:480.3px;font-size:18.5px;line-height:18.5px;color:#111;font-weight:normal;font-style:normal;">04-021-5017</div>
<div class="t" style="left:1737.0px;width:98px;text-align:right;top:480.3px;font-size:18.5px;line-height:18.5px;color:#5d52d8;font-weight:normal;font-style:normal;">2.550890</div>
<div style="position:absolute;left:1841px;top:473.7px;width:89px;height:31px;overflow:hidden">
<div class="t" style="left:-4.5px;width:98px;text-align:right;top:6.6px;font-size:18.5px;line-height:18.5px;color:#5d52d8;font-weight:normal;font-style:normal;">1.601410</div>
</div>
<div class="t" style="left:17.5px;width:80px;text-align:center;top:511.2px;font-size:18.9px;line-height:18.9px;color:#22a52a;font-weight:normal;font-style:normal;">5772</div>
<div class="t" style="left:121.2px;top:511.2px;font-size:18.9px;line-height:18.9px;color:#111;font-weight:normal;font-style:normal;">18 of 31</div>
<div class="t" style="left:200.6px;top:513.5px;font-size:16px;line-height:16px;color:#111;font-weight:normal;font-style:italic;letter-spacing:1.1px;">(58%)</div>
<div class="t" style="left:265.5px;top:508.5px;font-size:17.6px;line-height:17.6px;color:#111;font-weight:normal;font-style:normal;"><span>Cr</span><span style="font-size:15px;position:relative;top:9px;margin-left:0px;margin-right:4.5px">0.02</span><span>Al</span><span style="font-size:15px;position:relative;top:9px;margin-left:0px;margin-right:4.5px">1.98</span><span>O</span><span style="font-size:15px;position:relative;top:9px;margin-left:0px;margin-right:4.5px">3</span></div>
<div class="t" style="left:577.0px;top:511.7px;font-size:18.3px;line-height:18.3px;color:#111;font-weight:normal;font-style:normal;">Aluminum Chromium Oxide</div>
<div class="t" style="left:889.0px;top:511.7px;font-size:18.3px;line-height:18.3px;color:#111;font-weight:normal;font-style:normal;">Corundum</div>
<div class="t" style="left:1202.0px;top:511.7px;font-size:18.3px;line-height:18.3px;color:#111;font-weight:normal;font-style:normal;"></div>
<div class="r" style="left:1434px;top:512.4px;width:17.5px;height:17.5px;border-radius:50%;background:radial-gradient(circle at 45% 35%,#ffa080,#f04020 60%,#b02010);box-shadow:inset 0 0 0 1px #b02010;"></div>
<div class="t" style="left:1462.5px;top:511.7px;font-size:18.3px;line-height:18.3px;color:#111;font-weight:normal;font-style:normal;">B</div>
<svg style="left:1526px;top:512.9px" width="15" height="15" viewBox="0 0 15 15"><path d="M1.5 8.5 Q3 9.5 4.5 13.5 Q8 5 13.5 1" fill="none" stroke="#111" stroke-width="1.6"/></svg>
<div class="t" style="left:1580.5px;width:160px;text-align:center;top:511.5px;font-size:18.5px;line-height:18.5px;color:#111;font-weight:normal;font-style:normal;">04-023-6375</div>
<div class="t" style="left:1737.0px;width:98px;text-align:right;top:511.5px;font-size:18.5px;line-height:18.5px;color:#5d52d8;font-weight:normal;font-style:normal;">2.086020</div>
<div style="position:absolute;left:1841px;top:504.9px;width:89px;height:31px;overflow:hidden">
<div class="t" style="left:-4.5px;width:98px;text-align:right;top:6.6px;font-size:18.5px;line-height:18.5px;color:#5d52d8;font-weight:normal;font-style:normal;">2.552300</div>
</div>
<div class="r" style="left:1930px;top:287px;width:29.5px;height:257px;background:#f0f0f0;"></div>
<svg style="left:1937px;top:297px" width="15" height="12" viewBox="0 0 15 12"><path d="M2 10 L7.5 3.5 L13 10" fill="none" stroke="#505050" stroke-width="2.6"/></svg>
<svg style="left:1937px;top:523px" width="15" height="12" viewBox="0 0 15 12"><path d="M2 2 L7.5 8.5 L13 2" fill="none" stroke="#505050" stroke-width="2.6"/></svg>
<div class="r" style="left:1932px;top:318px;width:25px;height:18px;background:#cdcdcd;"></div>
<div class="r" style="left:13px;top:543.5px;width:1946px;height:28px;background:#f0f0f0;"></div>
<div class="r" style="left:44px;top:545px;width:1410px;height:26px;background:#cdcdcd;"></div>
<svg style="left:21px;top:551px" width="12" height="14" viewBox="0 0 12 14"><path d="M10 1.5 L3 7 L10 12.5" fill="none" stroke="#505050" stroke-width="2.6"/></svg>
<svg style="left:1910px;top:551px" width="12" height="14" viewBox="0 0 12 14"><path d="M2 1.5 L9 7 L2 12.5" fill="none" stroke="#505050" stroke-width="2.6"/></svg>
<div class="r" style="left:12px;top:573.5px;width:1949px;height:8px;background:#f8f8f8;"></div>
<div class="r" style="left:12px;top:581px;width:1949px;height:1.6px;background:#777;"></div>
<div class="r" style="left:12px;top:582.6px;width:1949px;height:38px;background:#f0f0f0;"></div>
<div class="r" style="left:15px;top:588.5px;width:208px;height:32px;background:#ececec;border:1px solid #d9d9d9;"></div>
<div class="t" style="left:27.8px;top:596.2px;font-size:18.62px;line-height:18.62px;color:#111;font-weight:normal;font-style:normal;">1D Diffraction Patterns</div>
<div class="r" style="left:434.5px;top:588.5px;width:77.79999999999995px;height:32px;background:#ececec;border:1px solid #d9d9d9;"></div>
<div class="t" style="left:444.2px;top:596.4px;font-size:17.87px;line-height:17.87px;color:#111;font-weight:normal;font-style:normal;">Phases</div>
<div class="r" style="left:512.3px;top:588.5px;width:153.10000000000002px;height:32px;background:#ececec;border:1px solid #d9d9d9;"></div>
<div class="t" style="left:522.0px;top:595.7px;font-size:18.71px;line-height:18.71px;color:#111;font-weight:normal;font-style:normal;">Peaks (17 of 50)</div>
<div class="r" style="left:223px;top:586px;width:211.5px;height:40px;background:#fff;border:1px solid #d8d8d8;border-bottom:none;"></div>
<div class="t" style="left:234.0px;top:593.0px;font-size:18.88px;line-height:18.88px;color:#111;font-weight:normal;font-style:normal;">2D Diffraction Patterns</div>
<div class="r" style="left:12px;top:620.5px;width:1949px;height:591px;background:#f0f0f0;"></div>
<div class="r" style="left:13px;top:620.5px;width:1944px;height:585px;background:#fff;border:1px solid #d4d4d4;"></div>
<div class="r" style="left:14px;top:626px;width:1503px;height:578px;background:#f0f0f0;"></div>
<div class="r" style="left:1519px;top:622px;width:437px;height:582px;background:#f0f0f0;"></div>
<div class="r" style="left:224px;top:615px;width:210px;height:8px;background:#fff;"></div>
<div class="r" style="left:14px;top:626px;width:106px;height:46px;background:linear-gradient(#f2f2f2,#ececec);"></div>
<div class="r" style="left:14px;top:671px;width:106px;height:1.6px;background:#a0a0a0;"></div>
<div class="t" style="left:38.5px;top:637.9px;font-size:18.5px;line-height:18.5px;color:#111;font-weight:normal;font-style:normal;">2θ (°)</div>
<svg style="left:95px;top:645px" width="12" height="8" viewBox="0 0 12 8"><path d="M1 1 L11 1 L6 7 Z" fill="#111"/></svg>
<div class="r" style="left:120px;top:626.5px;width:1398px;height:46px;background:#066ed6;"></div>
<div class="r" style="left:120px;top:626.5px;width:1398px;height:1.5px;background:#1a6cc8;"></div>
<div class="r" style="left:120px;top:669.5px;width:1398px;height:3px;background:#4a7fb2;"></div>
<div class="r" style="left:142px;top:664px;width:2px;height:6px;background:#d8e8f8;"></div>
<div class="t" style="left:113.0px;width:60px;text-align:center;top:643.8px;font-size:18.3px;line-height:18.3px;color:#fff;font-weight:normal;font-style:normal;">105</div>
<div class="r" style="left:194px;top:664px;width:2px;height:6px;background:#d8e8f8;"></div>
<div class="t" style="left:164.9px;width:60px;text-align:center;top:643.8px;font-size:18.3px;line-height:18.3px;color:#fff;font-weight:normal;font-style:normal;">100</div>
<div class="r" style="left:242px;top:664px;width:2px;height:6px;background:#d8e8f8;"></div>
<div class="t" style="left:213.1px;width:60px;text-align:center;top:643.8px;font-size:18.3px;line-height:18.3px;color:#fff;font-weight:normal;font-style:normal;">95</div>
<div class="r" style="left:292px;top:664px;width:2px;height:6px;background:#d8e8f8;"></div>
<div class="t" style="left:263.4px;width:60px;text-align:center;top:643.8px;font-size:18.3px;line-height:18.3px;color:#fff;font-weight:normal;font-style:normal;">90</div>
<div class="r" style="left:341px;top:664px;width:2px;height:6px;background:#d8e8f8;"></div>
<div class="t" style="left:312.0px;width:60px;text-align:center;top:643.8px;font-size:18.3px;line-height:18.3px;color:#fff;font-weight:normal;font-style:normal;">85</div>
<div class="r" style="left:390px;top:664px;width:2px;height:6px;background:#d8e8f8;"></div>
<div class="t" style="left:360.8px;width:60px;text-align:center;top:643.8px;font-size:18.3px;line-height:18.3px;color:#fff;font-weight:normal;font-style:normal;">80</div>
<div class="r" style="left:442px;top:664px;width:2px;height:6px;background:#d8e8f8;"></div>
<div class="t" style="left:413.1px;width:60px;text-align:center;top:643.8px;font-size:18.3px;line-height:18.3px;color:#fff;font-weight:normal;font-style:normal;">75</div>
<div class="r" style="left:491px;top:664px;width:2px;height:6px;background:#d8e8f8;"></div>
<div class="t" style="left:461.6px;width:60px;text-align:center;top:643.8px;font-size:18.3px;line-height:18.3px;color:#fff;font-weight:normal;font-style:normal;">85</div>
<div class="r" style="left:543px;top:664px;width:2px;height:6px;background:#d8e8f8;"></div>
<div class="t" style="left:513.7px;width:60px;text-align:center;top:643.8px;font-size:18.3px;line-height:18.3px;color:#fff;font-weight:normal;font-style:normal;">80</div>
<div class="r" style="left:591px;top:664px;width:2px;height:6px;background:#d8e8f8;"></div>
<div class="t" style="left:561.9px;width:60px;text-align:center;top:643.8px;font-size:18.3px;line-height:18.3px;color:#fff;font-weight:normal;font-style:normal;">75</div>
<div class="r" style="left:641px;top:664px;width:2px;height:6px;background:#d8e8f8;"></div>
<div class="t" style="left:612.1px;width:60px;text-align:center;top:643.8px;font-size:18.3px;line-height:18.3px;color:#fff;font-weight:normal;font-style:normal;">70</div>
<div class="r" style="left:690px;top:664px;width:2px;height:6px;background:#d8e8f8;"></div>
<div class="t" style="left:661.1px;width:60px;text-align:center;top:643.8px;font-size:18.3px;line-height:18.3px;color:#fff;font-weight:normal;font-style:normal;">65</div>
<div class="r" style="left:739px;top:664px;width:2px;height:6px;background:#d8e8f8;"></div>
<div class="t" style="left:709.7px;width:60px;text-align:center;top:643.8px;font-size:18.3px;line-height:18.3px;color:#fff;font-weight:normal;font-style:normal;">60</div>
<div class="r" style="left:790px;top:664px;width:2px;height:6px;background:#d8e8f8;"></div>
<div class="t" style="left:761.4px;width:60px;text-align:center;top:643.8px;font-size:18.3px;line-height:18.3px;color:#fff;font-weight:normal;font-style:normal;">55</div>
<div class="r" style="left:839px;top:664px;width:2px;height:6px;background:#d8e8f8;"></div>
<div class="t" style="left:809.9px;width:60px;text-align:center;top:643.8px;font-size:18.3px;line-height:18.3px;color:#fff;font-weight:normal;font-style:normal;">65</div>
<div class="r" style="left:891px;top:664px;width:2px;height:6px;background:#d8e8f8;"></div>
<div class="t" style="left:862.2px;width:60px;text-align:center;top:643.8px;font-size:18.3px;line-height:18.3px;color:#fff;font-weight:normal;font-style:normal;">60</div>
<div class="r" style="left:939px;top:664px;width:2px;height:6px;background:#d8e8f8;"></div>
<div class="t" style="left:910.4px;width:60px;text-align:center;top:643.8px;font-size:18.3px;line-height:18.3px;color:#fff;font-weight:normal;font-style:normal;">55</div>
<div class="r" style="left:989px;top:664px;width:2px;height:6px;background:#d8e8f8;"></div>
<div class="t" style="left:960.4px;width:60px;text-align:center;top:643.8px;font-size:18.3px;line-height:18.3px;color:#fff;font-weight:normal;font-style:normal;">50</div>
<div class="r" style="left:1039px;top:664px;width:2px;height:6px;background:#d8e8f8;"></div>
<div class="t" style="left:1009.6px;width:60px;text-align:center;top:643.8px;font-size:18.3px;line-height:18.3px;color:#fff;font-weight:normal;font-style:normal;">45</div>
<div class="r" style="left:1087px;top:664px;width:2px;height:6px;background:#d8e8f8;"></div>
<div class="t" style="left:1058.0px;width:60px;text-align:center;top:643.8px;font-size:18.3px;line-height:18.3px;color:#fff;font-weight:normal;font-style:normal;">40</div>
<div class="r" style="left:1139px;top:664px;width:2px;height:6px;background:#d8e8f8;"></div>
<div class="t" style="left:1110.3px;width:60px;text-align:center;top:643.8px;font-size:18.3px;line-height:18.3px;color:#fff;font-weight:normal;font-style:normal;">35</div>
<div class="r" style="left:1188px;top:664px;width:2px;height:6px;background:#d8e8f8;"></div>
<div class="t" style="left:1158.5px;width:60px;text-align:center;top:643.8px;font-size:18.3px;line-height:18.3px;color:#fff;font-weight:normal;font-style:normal;">45</div>
<div class="r" style="left:1240px;top:664px;width:2px;height:6px;background:#d8e8f8;"></div>
<div class="t" style="left:1210.7px;width:60px;text-align:center;top:643.8px;font-size:18.3px;line-height:18.3px;color:#fff;font-weight:normal;font-style:normal;">40</div>
<div class="r" style="left:1288px;top:664px;width:2px;height:6px;background:#d8e8f8;"></div>
<div class="t" style="left:1259.3px;width:60px;text-align:center;top:643.8px;font-size:18.3px;line-height:18.3px;color:#fff;font-weight:normal;font-style:normal;">35</div>
<div class="r" style="left:1339px;top:664px;width:2px;height:6px;background:#d8e8f8;"></div>
<div class="t" style="left:1309.8px;width:60px;text-align:center;top:643.8px;font-size:18.3px;line-height:18.3px;color:#fff;font-weight:normal;font-style:normal;">30</div>
<div class="r" style="left:1387px;top:664px;width:2px;height:6px;background:#d8e8f8;"></div>
<div class="t" style="left:1358.4px;width:60px;text-align:center;top:643.8px;font-size:18.3px;line-height:18.3px;color:#fff;font-weight:normal;font-style:normal;">25</div>
<div class="r" style="left:1436px;top:664px;width:2px;height:6px;background:#d8e8f8;"></div>
<div class="t" style="left:1406.6px;width:60px;text-align:center;top:643.8px;font-size:18.3px;line-height:18.3px;color:#fff;font-weight:normal;font-style:normal;">20</div>
<div class="r" style="left:1487px;top:664px;width:2px;height:6px;background:#d8e8f8;"></div>
<div class="t" style="left:1458.2px;width:60px;text-align:center;top:643.8px;font-size:18.3px;line-height:18.3px;color:#fff;font-weight:normal;font-style:normal;">15</div>
<div class="r" style="left:468.5px;top:626.5px;width:2.5px;height:46px;background:#b89a70;opacity:0.55;"></div>
<div class="r" style="left:817px;top:626.5px;width:2.5px;height:46px;background:#b89a70;opacity:0.55;"></div>
<div class="r" style="left:1166px;top:626.5px;width:2.5px;height:46px;background:#b89a70;opacity:0.55;"></div>
<div class="r" style="left:33.5px;top:690px;width:4.5px;height:505px;background:#dadada;border:1px solid #cfcfcf;"></div>
<div class="r" style="left:52px;top:690px;width:12px;height:1.3px;background:#a8a8a8;"></div>
<div class="r" style="left:52px;top:732px;width:12px;height:1.3px;background:#a8a8a8;"></div>
<div class="r" style="left:52px;top:773px;width:12px;height:1.3px;background:#a8a8a8;"></div>
<div class="r" style="left:52px;top:815px;width:12px;height:1.3px;background:#a8a8a8;"></div>
<div class="r" style="left:52px;top:856px;width:12px;height:1.3px;background:#a8a8a8;"></div>
<div class="r" style="left:52px;top:898px;width:12px;height:1.3px;background:#a8a8a8;"></div>
<div class="r" style="left:52px;top:940px;width:12px;height:1.3px;background:#a8a8a8;"></div>
<div class="r" style="left:52px;top:981px;width:12px;height:1.3px;background:#a8a8a8;"></div>
<div class="r" style="left:52px;top:1023px;width:12px;height:1.3px;background:#a8a8a8;"></div>
<div class="r" style="left:52px;top:1064px;width:12px;height:1.3px;background:#a8a8a8;"></div>
<div class="r" style="left:52px;top:1106px;width:12px;height:1.3px;background:#a8a8a8;"></div>
<div class="r" style="left:52px;top:1147px;width:12px;height:1.3px;background:#a8a8a8;"></div>
<div class="r" style="left:52px;top:1189px;width:12px;height:1.3px;background:#a8a8a8;"></div>
<div class="t" style="left:35.4px;width:80px;text-align:right;top:680.7px;font-size:19.3px;line-height:19.3px;color:#111;font-weight:normal;font-style:normal;">800%</div>
<div class="t" style="left:35.4px;width:80px;text-align:right;top:847.0px;font-size:19.3px;line-height:19.3px;color:#111;font-weight:normal;font-style:normal;">400%</div>
<div class="t" style="left:35.4px;width:80px;text-align:right;top:1013.0px;font-size:19.3px;line-height:19.3px;color:#111;font-weight:normal;font-style:normal;">200%</div>
<div class="t" style="left:35.4px;width:80px;text-align:right;top:1179.0px;font-size:19.3px;line-height:19.3px;color:#111;font-weight:normal;font-style:normal;">100%</div>
<svg style="left:18px;top:1177px" width="35" height="21" viewBox="0 0 35 21"><path d="M1 1 L25 1 L34 10.5 L25 20 L1 20 Z" fill="#0a74dc" stroke="#0a5cb0" stroke-width="1"/></svg>
<div class="r" style="left:120px;top:672px;width:1398px;height:1.5px;background:#8a8a8a;"></div>
<div class="r" style="left:120px;top:672px;width:2.5px;height:346.5px;background:#8f8f8f;"></div>
<div class="r" style="left:120px;top:1018.5px;width:1398px;height:185.5px;background:#f0f0f0;border-left:2px solid #8a8a8a;border-right:2px solid #8a8a8a;border-bottom:1.5px solid #8a8a8a;"></div>
<svg style="left:0px;top:0px" width="1975" height="1216" viewBox="0 0 1975 1216">
<defs>
<clipPath id="pc0"><rect x="122.5" y="672.5" width="346.0" height="345.5"/></clipPath>
<clipPath id="dc0"><path d="M129.8 844.5 A167.0 167.0 0 0 1 463.8 844.5 Z"/></clipPath>
<clipPath id="bc0"><rect x="122.5" y="844.5" width="346.0" height="173.5"/></clipPath>
<clipPath id="pc1"><rect x="470.5" y="672.5" width="346.5" height="345.5"/></clipPath>
<clipPath id="dc1"><path d="M477.4 844.5 A167.0 167.0 0 0 1 811.4 844.5 Z"/></clipPath>
<clipPath id="bc1"><rect x="470.5" y="844.5" width="346.5" height="173.5"/></clipPath>
<clipPath id="pc2"><rect x="819.0" y="672.5" width="347.0" height="345.5"/></clipPath>
<clipPath id="dc2"><path d="M827.8 844.5 A167.0 167.0 0 0 1 1161.8 844.5 Z"/></clipPath>
<clipPath id="bc2"><rect x="819.0" y="844.5" width="347.0" height="173.5"/></clipPath>
<clipPath id="pc3"><rect x="1168.0" y="672.5" width="346.0" height="345.5"/></clipPath>
<clipPath id="dc3"><path d="M1175.6 844.5 A167.0 167.0 0 0 1 1509.6 844.5 Z"/></clipPath>
<clipPath id="bc3"><rect x="1168.0" y="844.5" width="346.0" height="173.5"/></clipPath>
<filter id="blur1"><feGaussianBlur stdDeviation="0.6"/></filter><filter id="blur2" x="-20%" width="140%"><feGaussianBlur stdDeviation="1.1"/></filter>
</defs>
<rect x="122.5" y="672.5" width="346.0" height="345.5" fill="#000"/>
<g clip-path="url(#pc0)">
<path d="M129.8 844.5 A167.0 167.0 0 0 1 463.8 844.5 Z" fill="#161616"/>
<g clip-path="url(#dc0)"><g filter="url(#blur2)">
<line x1="181.5" y1="672.5" x2="181.5" y2="844.5" stroke="#e0e0e0" stroke-width="4.5"/>
<line x1="239.6" y1="672.5" x2="239.6" y2="844.5" stroke="#a0a0a0" stroke-width="4"/>
<line x1="285.5" y1="672.5" x2="285.5" y2="844.5" stroke="#909090" stroke-width="3.5"/>
<line x1="302.7" y1="672.5" x2="302.7" y2="844.5" stroke="#c8c8c8" stroke-width="4"/>
<line x1="328.4" y1="672.5" x2="328.4" y2="844.5" stroke="#585858" stroke-width="3.5"/>
<line x1="351.9" y1="672.5" x2="351.9" y2="844.5" stroke="#303030" stroke-width="3"/>
<line x1="387.8" y1="672.5" x2="387.8" y2="844.5" stroke="#505050" stroke-width="3.5"/>
<line x1="423.8" y1="672.5" x2="423.8" y2="844.5" stroke="#ffffff" stroke-width="6.5"/>
</g></g>
<g clip-path="url(#bc0)" filter="url(#blur1)">
<line x1="181.5" y1="844.5" x2="181.5" y2="1018.0" stroke="#0d0b28" stroke-width="4"/>
<line x1="239.6" y1="844.5" x2="239.6" y2="1018.0" stroke="#0d0b28" stroke-width="3"/>
<line x1="285.5" y1="844.5" x2="285.5" y2="1018.0" stroke="#0d0b28" stroke-width="3"/>
<line x1="302.7" y1="844.5" x2="302.7" y2="1018.0" stroke="#0d0b28" stroke-width="4"/>
<line x1="328.4" y1="844.5" x2="328.4" y2="1018.0" stroke="#0d0b28" stroke-width="3"/>
<line x1="387.8" y1="844.5" x2="387.8" y2="1018.0" stroke="#0d0b28" stroke-width="3"/>
<line x1="423.8" y1="844.5" x2="423.8" y2="1018.0" stroke="#0d0b28" stroke-width="5"/>
</g>
</g>
<rect x="470.5" y="672.5" width="346.5" height="345.5" fill="#000"/>
<g clip-path="url(#pc1)">
<path d="M477.4 844.5 A167.0 167.0 0 0 1 811.4 844.5 Z" fill="#0d0d0d"/>
<g clip-path="url(#dc1)"><g filter="url(#blur1)">
<circle cx="2737" cy="844.5" r="2200" fill="none" stroke="#3a3a3a" stroke-width="2.5"/>
<circle cx="2546" cy="844.5" r="1973" fill="none" stroke="#ffffff" stroke-width="4.5"/>
<circle cx="1773.7" cy="844.5" r="1115" fill="none" stroke="#a8a8a8" stroke-width="3"/>
<circle cx="1774" cy="844.5" r="1099" fill="none" stroke="#a8a8a8" stroke-width="3"/>
<circle cx="1980.8" cy="844.5" r="1253" fill="none" stroke="#a8a8a8" stroke-width="3"/>
<circle cx="1605.3" cy="844.5" r="840" fill="none" stroke="#ffffff" stroke-width="4"/>
</g></g>
<g clip-path="url(#bc1)" filter="url(#blur1)">
<circle cx="2737" cy="844.5" r="2200" fill="none" stroke="#0d0b28" stroke-width="3"/>
<circle cx="2546" cy="844.5" r="1973" fill="none" stroke="#0d0b28" stroke-width="4"/>
<circle cx="1773.7" cy="844.5" r="1115" fill="none" stroke="#3b32a8" stroke-width="4.5"/>
<circle cx="1774" cy="844.5" r="1099" fill="none" stroke="#3b32a8" stroke-width="4.5"/>
<circle cx="1980.8" cy="844.5" r="1253" fill="none" stroke="#0d0b28" stroke-width="4"/>
<circle cx="1605.3" cy="844.5" r="840" fill="none" stroke="#5b50f2" stroke-width="4.5"/>
</g>
</g>
<rect x="819.0" y="672.5" width="347.0" height="345.5" fill="#000"/>
<g clip-path="url(#pc2)">
<path d="M827.8 844.5 A167.0 167.0 0 0 1 1161.8 844.5 Z" fill="#0f0f0f"/>
<g clip-path="url(#dc2)"><g filter="url(#blur1)">
<circle cx="1931.7" cy="844.5" r="1054" fill="none" stroke="#a8a8a8" stroke-width="3"/>
<circle cx="1756" cy="844.5" r="840" fill="none" stroke="#ffffff" stroke-width="4"/>
<circle cx="1685.6" cy="844.5" r="720" fill="none" stroke="#a8a8a8" stroke-width="3"/>
<circle cx="1567.7" cy="844.5" r="512" fill="none" stroke="#d0d0d0" stroke-width="3.5"/>
<circle cx="1572" cy="844.5" r="500" fill="none" stroke="#3a3a3a" stroke-width="2.5"/>
<circle cx="1545" cy="844.5" r="434" fill="none" stroke="#5a5a5a" stroke-width="3"/>
<circle cx="1586.8" cy="844.5" r="447" fill="none" stroke="#ffffff" stroke-width="4"/>
</g></g>
<g clip-path="url(#bc2)" filter="url(#blur1)">
<circle cx="1938" cy="844.5" r="1115" fill="none" stroke="#221c66" stroke-width="4.5"/>
<circle cx="1931.7" cy="844.5" r="1054" fill="none" stroke="#0d0b28" stroke-width="4"/>
<circle cx="1756" cy="844.5" r="840" fill="none" stroke="#5b50f2" stroke-width="4.5"/>
<circle cx="1685.6" cy="844.5" r="720" fill="none" stroke="#3b32a8" stroke-width="4.5"/>
<circle cx="1567.7" cy="844.5" r="512" fill="none" stroke="#5b50f2" stroke-width="4.5"/>
<circle cx="1572" cy="844.5" r="500" fill="none" stroke="#0d0b28" stroke-width="3"/>
<circle cx="1545" cy="844.5" r="434" fill="none" stroke="#3b32a8" stroke-width="4.5"/>
<circle cx="1586.8" cy="844.5" r="447" fill="none" stroke="#5b50f2" stroke-width="4.5"/>
</g>
</g>
<rect x="1168.0" y="672.5" width="346.0" height="345.5" fill="#000"/>
<g clip-path="url(#pc3)">
<path d="M1175.6 844.5 A167.0 167.0 0 0 1 1509.6 844.5 Z" fill="#1b1b1b"/>
<g clip-path="url(#dc3)"><g filter="url(#blur1)">
<circle cx="1717.5" cy="844.5" r="512" fill="none" stroke="#ffffff" stroke-width="4"/>
<circle cx="1703.6" cy="844.5" r="480" fill="none" stroke="#3a3a3a" stroke-width="2.5"/>
<circle cx="1714.6" cy="844.5" r="452" fill="none" stroke="#5a5a5a" stroke-width="3"/>
<circle cx="1676" cy="844.5" r="388" fill="none" stroke="#ffffff" stroke-width="4.5"/>
<circle cx="1651.7" cy="844.5" r="269" fill="none" stroke="#c8c8c8" stroke-width="3.5"/>
</g></g>
<g clip-path="url(#bc3)" filter="url(#blur1)">
<circle cx="1717.5" cy="844.5" r="512" fill="none" stroke="#5b50f2" stroke-width="4.5"/>
<circle cx="1714.6" cy="844.5" r="452" fill="none" stroke="#3b32a8" stroke-width="4.5"/>
<circle cx="1676" cy="844.5" r="388" fill="none" stroke="#5b50f2" stroke-width="4.5"/>
<circle cx="1651.7" cy="844.5" r="269" fill="none" stroke="#5b50f2" stroke-width="4.5"/>
</g>
</g>
<rect x="468.5" y="671.5" width="2" height="346.5" fill="#8c8c8c"/>
<rect x="817.0" y="671.5" width="2" height="346.5" fill="#8c8c8c"/>
<rect x="1166.0" y="671.5" width="2" height="346.5" fill="#8c8c8c"/>
<rect x="1513.5" y="671.5" width="5" height="346.5" fill="#b8b8b8"/>
<rect x="1515" y="671.5" width="2" height="346.5" fill="#f4f4f4"/>
</svg>
<div class="t" style="left:133.5px;top:684.4px;font-size:19.96px;line-height:19.96px;color:#fff;font-weight:bold;font-style:normal;">Corundum Osci_004.gfrm</div>
<div class="t" style="left:482.5px;top:684.4px;font-size:19.96px;line-height:19.96px;color:#fff;font-weight:bold;font-style:normal;">Corundum Osci_003.gfrm</div>
<div class="t" style="left:830.4px;top:684.4px;font-size:19.96px;line-height:19.96px;color:#fff;font-weight:bold;font-style:normal;">Corundum Osci_002.gfrm</div>
<div class="t" style="left:1179.4px;top:684.4px;font-size:19.96px;line-height:19.96px;color:#fff;font-weight:bold;font-style:normal;">Corundum Osci_001.gfrm</div>
<div class="r" style="left:1516.5px;top:626px;width:1.5px;height:578px;background:#8a8a8a;"></div>
<div class="t" style="left:1532.8px;top:636.3px;font-size:18.53px;line-height:18.53px;color:#2f4ea8;font-weight:normal;font-style:normal;">Image Settings</div>
<div class="r" style="left:1665px;top:644px;width:285px;height:1.3px;background:#a0a0a0;"></div>
<div class="r" style="left:1533px;top:666.5px;width:22px;height:22px;background:#fff;border:1.6px solid #333;"></div>
<svg style="left:1533px;top:666.5px" width="22" height="22" viewBox="0 0 22 22"><path d="M4.5 11 L9 15.5 L18 5.5" fill="none" stroke="#333" stroke-width="2.2"/></svg>
<div class="t" style="left:1561.7px;top:667.5px;font-size:18.23px;line-height:18.23px;color:#111;font-weight:normal;font-style:normal;">Split view</div>
<div class="t" style="left:1532.8px;top:703.7px;font-size:18.06px;line-height:18.06px;color:#2f4ea8;font-weight:normal;font-style:normal;">Simulation Settings</div>
<div class="r" style="left:1696px;top:711.5px;width:254px;height:1.3px;background:#a0a0a0;"></div>
<div class="t" style="left:1532.8px;top:733.0px;font-size:18.5px;line-height:18.5px;color:#111;font-weight:normal;font-style:normal;">Crystallite size (Å</div>
<svg style="left:1681px;top:740px" width="12" height="8" viewBox="0 0 12 8"><path d="M1 1 L11 1 L6 7 Z" fill="#111"/></svg>
<div class="t" style="left:1695.0px;top:733.0px;font-size:18.5px;line-height:18.5px;color:#111;font-weight:normal;font-style:normal;">):</div>
<div class="r" style="left:1724.5px;top:725.5px;width:92.5px;height:33.5px;background:#fff;border:1px solid #a8a8a8;"></div>
<div class="t" style="left:1729.2px;top:733.3px;font-size:18.6px;line-height:18.6px;color:#111;font-weight:normal;font-style:normal;">500.0</div>
<div class="r" style="left:1550px;top:778.5px;width:375px;height:5.5px;background:#e4e4e4;border:1px solid #d4d4d4;border-radius:2px;"></div>
<svg style="left:1728px;top:764px" width="21" height="35" viewBox="0 0 21 35"><path d="M1 1 L20 1 L20 24 L10.5 33.5 L1 24 Z" fill="#0a74dc" stroke="#0a5cb0" stroke-width="1"/></svg>
<div class="r" style="left:1550px;top:798px;width:1.3px;height:11px;background:#a8a8a8;"></div>
<div class="t" style="left:1520.4px;width:60px;text-align:center;top:815.3px;font-size:18.6px;line-height:18.6px;color:#111;font-weight:normal;font-style:normal;">0</div>
<div class="r" style="left:1644px;top:798px;width:1.3px;height:11px;background:#a8a8a8;"></div>
<div class="t" style="left:1615.0px;width:60px;text-align:center;top:815.3px;font-size:18.6px;line-height:18.6px;color:#111;font-weight:normal;font-style:normal;">250</div>
<div class="r" style="left:1738px;top:798px;width:1.3px;height:11px;background:#a8a8a8;"></div>
<div class="t" style="left:1708.3px;width:60px;text-align:center;top:815.3px;font-size:18.6px;line-height:18.6px;color:#111;font-weight:normal;font-style:normal;">500</div>
<div class="r" style="left:1831px;top:798px;width:1.3px;height:11px;background:#a8a8a8;"></div>
<div class="t" style="left:1801.6px;width:60px;text-align:center;top:815.3px;font-size:18.6px;line-height:18.6px;color:#111;font-weight:normal;font-style:normal;">750</div>
<div class="r" style="left:1923px;top:798px;width:1.3px;height:11px;background:#a8a8a8;"></div>
<div class="t" style="left:1893.6px;width:60px;text-align:center;top:815.3px;font-size:18.6px;line-height:18.6px;color:#111;font-weight:normal;font-style:normal;">1000</div>
<div class="t" style="left:1532.3px;top:852.3px;font-size:19.7px;line-height:19.7px;color:#111;font-weight:normal;font-style:normal;">Intensity:</div>
<div class="r" style="left:1621px;top:850px;width:22.5px;height:22.5px;border-radius:50%;background:#fff;border:1.6px solid #333;"></div>
<div class="r" style="left:1626.5px;top:855.5px;width:11.5px;height:11.5px;border-radius:50%;background:#222;"></div>
<div class="t" style="left:1649.9px;top:854.2px;font-size:17.45px;line-height:17.45px;color:#111;font-weight:normal;font-style:normal;">Linear</div>
<div class="r" style="left:1721px;top:858.5px;width:67px;height:5px;background:#e4e4e4;border:1px solid #d6d6d6;"></div>
<div class="r" style="left:1713px;top:843.5px;width:8.5px;height:35.5px;background:#0a74dc;"></div>
<div class="r" style="left:1803px;top:850px;width:22.5px;height:22.5px;border-radius:50%;background:#fff;border:1.6px solid #333;"></div>
<div class="t" style="left:1832.3px;top:853.3px;font-size:18.6px;line-height:18.6px;color:#111;font-weight:normal;font-style:normal;">Sqrt</div>
<div class="r" style="left:1881px;top:850px;width:22.5px;height:22.5px;border-radius:50%;background:#fff;border:1.6px solid #333;"></div>
<div class="t" style="left:1909.6px;top:853.3px;font-size:18.6px;line-height:18.6px;color:#111;font-weight:normal;font-style:normal;">Log</div>
<div class="r" style="left:1621px;top:893.5px;width:22.5px;height:22.5px;background:#fff;border:1.6px solid #333;"></div>
<div class="t" style="left:1650.0px;top:895.4px;font-size:18.4px;line-height:18.4px;color:#111;font-weight:normal;font-style:normal;">Scale to images</div>
<div class="r" style="left:1525.5px;top:931.5px;width:425px;height:1.5px;background:#a4a4a4;"></div>
<div class="r" style="left:1533px;top:945.5px;width:19px;height:18px;background:#5a50f0;"></div>
<div class="t" style="left:1557.8px;top:945.8px;font-size:17.99px;line-height:17.99px;color:#111;font-weight:normal;font-style:italic;">Aluminum Oxide?</div>
<div class="r" style="left:1525.5px;top:977px;width:425px;height:1.5px;background:#a4a4a4;"></div>
<div class="r" style="left:1956px;top:620.5px;width:1.5px;height:585px;background:#d0d0d0;"></div>
</body></html>
